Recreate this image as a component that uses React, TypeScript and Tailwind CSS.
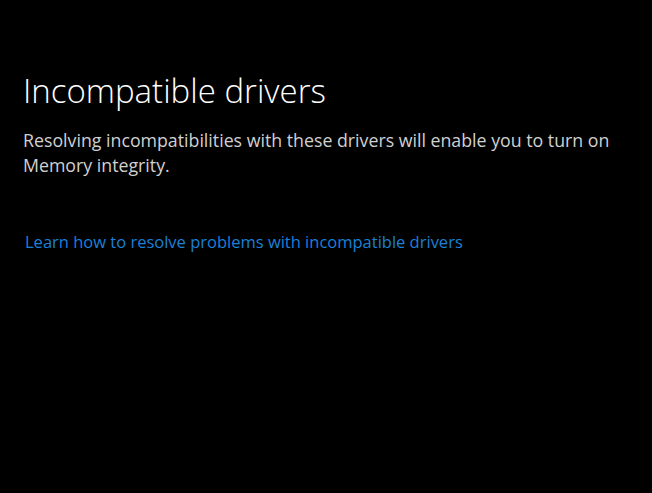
import React from 'react';

export default function App() {
  return (
    <div className="w-[652px] h-[493px] bg-black overflow-hidden" style={{ fontFamily: '"Open Sans", "Noto Sans", sans-serif' }}>
      <div className="pl-[23px] pt-[69px]">
        <h1 className="text-[33px] leading-[44px] font-light text-white">Incompatible drivers</h1>
        <p className="mt-[15px] text-[17.75px] leading-[25px] text-[#d0d0d0]">
          Resolving incompatibilities with these drivers will enable you to turn on
          <br />
          Memory integrity.
        </p>
        <a href="#" className="block mt-[52px] ml-[2px] text-[16.5px] leading-[24px] text-[#1a80d8]">
          Learn how to resolve problems with incompatible drivers
        </a>
      </div>
    </div>
  );
}
